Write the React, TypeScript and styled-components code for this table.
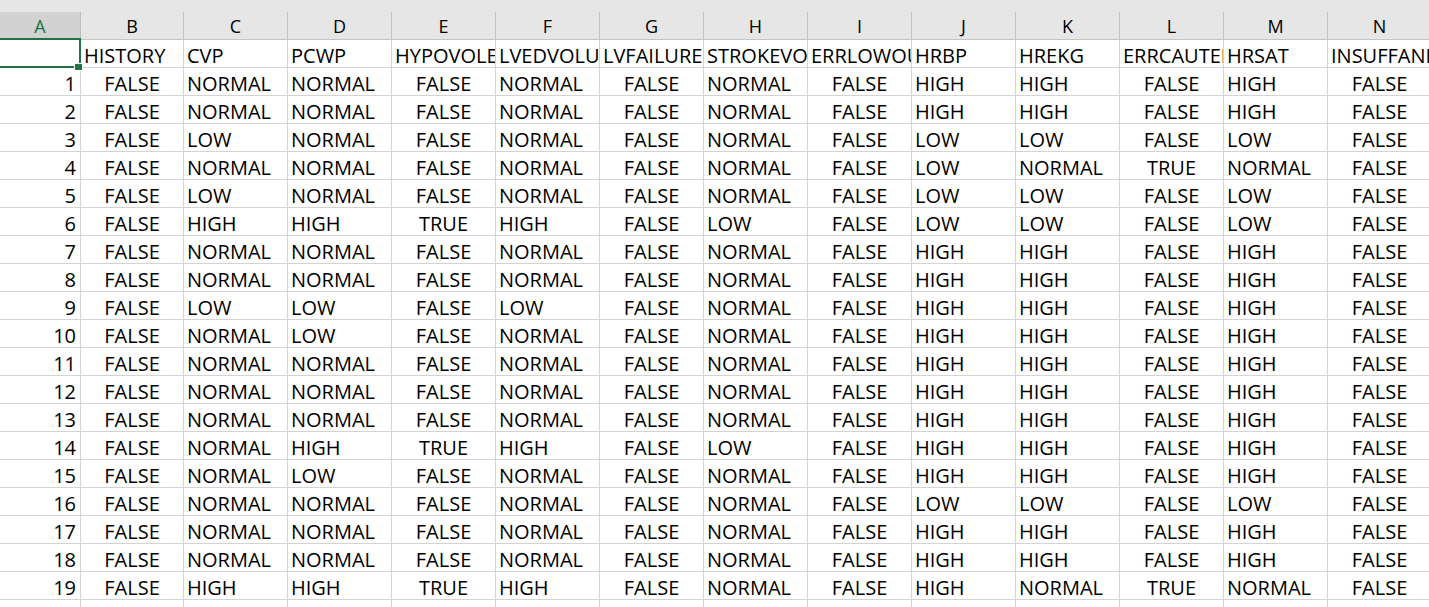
import React from "react";
import styled, { createGlobalStyle } from "styled-components";

const Global = createGlobalStyle`
  html, body { margin: 0; padding: 0; background: #ffffff; overflow: hidden; }
  body { font-family: "Open Sans", "Liberation Sans", sans-serif; color: #000; }
`;

const COLS = "81px 103px repeat(12, 104px)";
const letters = ["A", "B", "C", "D", "E", "F", "G", "H", "I", "J", "K", "L", "M", "N"];
const fields = [
  "",
  "HISTORY",
  "CVP",
  "PCWP",
  "HYPOVOLEMIA",
  "LVEDVOLUME",
  "LVFAILURE",
  "STROKEVOLUME",
  "ERRLOWOUTPUT",
  "HRBP",
  "HREKG",
  "ERRCAUTER",
  "HRSAT",
  "INSUFFANESTH",
];

const N = "NORMAL";
const F = "FALSE";
const T = "TRUE";
const H = "HIGH";
const L = "LOW";

const rows: string[][] = [
  [F, N, N, F, N, F, N, F, H, H, F, H, F],
  [F, N, N, F, N, F, N, F, H, H, F, H, F],
  [F, L, N, F, N, F, N, F, L, L, F, L, F],
  [F, N, N, F, N, F, N, F, L, N, T, N, F],
  [F, L, N, F, N, F, N, F, L, L, F, L, F],
  [F, H, H, T, H, F, L, F, L, L, F, L, F],
  [F, N, N, F, N, F, N, F, H, H, F, H, F],
  [F, N, N, F, N, F, N, F, H, H, F, H, F],
  [F, L, L, F, L, F, N, F, H, H, F, H, F],
  [F, N, L, F, N, F, N, F, H, H, F, H, F],
  [F, N, N, F, N, F, N, F, H, H, F, H, F],
  [F, N, N, F, N, F, N, F, H, H, F, H, F],
  [F, N, N, F, N, F, N, F, H, H, F, H, F],
  [F, N, H, T, H, F, L, F, H, H, F, H, F],
  [F, N, L, F, N, F, N, F, H, H, F, H, F],
  [F, N, N, F, N, F, N, F, L, L, F, L, F],
  [F, N, N, F, N, F, N, F, H, H, F, H, F],
  [F, N, N, F, N, F, N, F, H, H, F, H, F],
  [F, H, H, T, H, F, N, F, H, N, T, N, F],
];

const Sheet = styled.div`
  position: relative;
  width: 1429px;
  height: 607px;
  overflow: hidden;
  background: #ffffff;
`;

const TopBand = styled.div`
  height: 12px;
  background: #e6e6e6;
`;

const Row = styled.div`
  display: grid;
  grid-template-columns: ${COLS};
  height: 28px;
`;

const ColHead = styled.div<{ $active?: boolean }>`
  box-sizing: border-box;
  height: 28px;
  border-right: 1px solid ${(p) => (p.$active ? "#bdbdbd" : "#c4c4c4")};
  border-bottom: 1px solid #c4c4c4;
  background: ${(p) => (p.$active ? "#d2d2d2" : "#e6e6e6")};
  color: ${(p) => (p.$active ? "#217346" : "#000")};
  font-size: 18px;
  font-weight: 500;
  line-height: 28px;
  text-align: center;
`;

const Cell = styled.div<{ $align: "left" | "center" | "right" }>`
  box-sizing: border-box;
  height: 28px;
  padding: 4px 3px 0 3px;
  ${(p) => (p.$align === "right" ? "padding-right: 4px;" : "")}
  border-right: 1px solid #d4d4d4;
  border-bottom: 1px solid #d4d4d4;
  font-size: 20px;
  line-height: 23px;
  text-align: ${(p) => p.$align};
  white-space: nowrap;
  overflow: hidden;
  text-overflow: clip;
`;

const Selection = styled.div`
  position: absolute;
  left: -2px;
  top: 38px;
  width: 83px;
  height: 30px;
  box-sizing: border-box;
  border: 2px solid #217346;
  pointer-events: none;
`;

const FillHandle = styled.div`
  position: absolute;
  left: 75px;
  top: 64px;
  width: 7px;
  height: 6px;
  background: #217346;
  outline: 1px solid #ffffff;
`;

const alignFor = (v: string) =>
  v === F || v === T ? "center" : "left";

export default function App() {
  return (
    <>
      <Global />
      <Sheet>
        <TopBand />
        <Row>
          {letters.map((l, i) => (
            <ColHead key={l} $active={i === 0}>
              {l}
            </ColHead>
          ))}
        </Row>
        <Row>
          {fields.map((f, i) => (
            <Cell key={i} $align="left">
              {f}
            </Cell>
          ))}
        </Row>
        {rows.map((r, ri) => (
          <Row key={ri}>
            <Cell $align="right">{ri + 1}</Cell>
            {r.map((v, ci) => (
              <Cell key={ci} $align={alignFor(v)}>
                {v}
              </Cell>
            ))}
          </Row>
        ))}
        <Row>
          {letters.map((l) => (
            <Cell key={l} $align="left" />
          ))}
        </Row>
        <Selection />
        <FillHandle />
      </Sheet>
    </>
  );
}
